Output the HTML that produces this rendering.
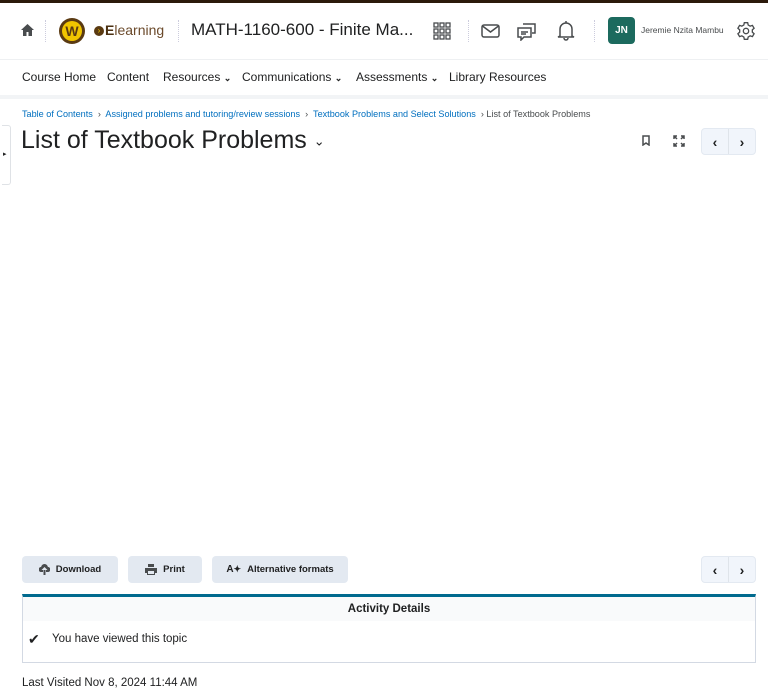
<!DOCTYPE html>
<html><head><meta charset="utf-8"><style>
*{box-sizing:border-box;margin:0;padding:0}
body{width:768px;height:699px;overflow:hidden;background:#fff;font-family:"Liberation Sans",sans-serif;color:#202122;position:relative}
.a{position:absolute;white-space:nowrap}
.btn{position:absolute;background:#e3e9f1;border-radius:4px;height:27px;top:556px;font-size:9.5px;font-weight:bold;color:#202122;display:flex;align-items:center;justify-content:center;gap:6px}
.nav{position:absolute;border:1px solid #e3e9f1;background:#f1f5fb;border-radius:4px;width:55px;height:27px;display:flex}
.nav span{flex:1;display:flex;align-items:center;justify-content:center;font-size:14px;font-weight:bold}
.nav span:first-child{border-right:1px solid #dfe4ea}
.n{position:absolute;top:70px;font-size:12px}
</style></head><body>
<div class="a" style="left:0;top:0;width:768px;height:3px;background:#2b1a0b"></div>
<svg class="a" style="left:21px;top:24px" width="13" height="12" viewBox="0 0 13 12"><path d="M6.5 0L0 6h2v6h3.5V8h2v4H11V6h2z" fill="#494c4e"/></svg>
<div class="a" style="left:45px;top:20px;height:22px;border-left:1px dotted #ccd"></div>
<div class="a" style="left:59px;top:18px;width:26px;height:26px;border-radius:50%;background:#5a3a12;"><div style="position:absolute;left:3px;top:3px;width:20px;height:20px;border-radius:50%;background:#f1c500;color:#5a3a12;font-weight:bold;font-size:14px;text-align:center;line-height:20px">W</div></div>
<div class="a" style="left:94px;top:26px;width:10px;height:10px;border-radius:50%;background:#5a3a12;color:#f1c500;font-size:8px;line-height:10px;text-align:center">›</div>
<div class="a" style="left:105px;top:22px;font-size:14px;color:#6b4a2b"><b style="color:#4a2f10">E</b>learning</div>
<div class="a" style="left:178px;top:20px;height:22px;border-left:1px dotted #ccd"></div>
<div class="a" style="left:191px;top:20px;font-size:17px;color:#202122">MATH-1160-600 - Finite Ma...</div>
<svg class="a" style="left:433px;top:22px" width="18" height="18" viewBox="0 0 18 18" fill="none" stroke="#494c4e" stroke-width="1.3"><rect x="1" y="1" width="4" height="4"/><rect x="7" y="1" width="4" height="4"/><rect x="13" y="1" width="4" height="4"/><rect x="1" y="7" width="4" height="4"/><rect x="7" y="7" width="4" height="4"/><rect x="13" y="7" width="4" height="4"/><rect x="1" y="13" width="4" height="4"/><rect x="7" y="13" width="4" height="4"/><rect x="13" y="13" width="4" height="4"/></svg>
<div class="a" style="left:468px;top:20px;height:22px;border-left:1px dotted #ccd"></div>
<svg class="a" style="left:481px;top:24px" width="19" height="14" viewBox="0 0 19 14" fill="none" stroke="#494c4e" stroke-width="1.5"><rect x="1" y="1" width="17" height="12" rx="2"/><path d="M1.5 2l8 6 8-6"/></svg>
<svg class="a" style="left:517px;top:21px" width="20" height="20" viewBox="0 0 20 20" fill="none" stroke="#494c4e" stroke-width="1.5"><path d="M6 3h12v9h-3"/><path d="M1 7h13v9H7l-3 3v-3H1z"/><path d="M4 11h7M4 13h5"/></svg>
<svg class="a" style="left:557px;top:20px" width="18" height="21" viewBox="0 0 18 21" fill="none" stroke="#494c4e" stroke-width="1.5"><path d="M9 1v2M3 16V9a6 6 0 0112 0v7l2 1H1z"/><path d="M7 18a2 2 0 004 0"/></svg>
<div class="a" style="left:594px;top:20px;height:22px;border-left:1px dotted #ccd"></div>
<div class="a" style="left:608px;top:17px;width:27px;height:27px;border-radius:4px;background:#1c6a5e;color:#fff;font-size:10px;font-weight:bold;text-align:center;line-height:27px">JN</div>
<div class="a" style="left:641px;top:25px;font-size:8.5px;color:#494c4e">Jeremie Nzita Mambu</div>
<svg class="a" style="left:736px;top:21px" width="20" height="20" viewBox="0 0 24 24" fill="none" stroke="#494c4e" stroke-width="1.6"><circle cx="12" cy="12" r="3.2"/><path d="M10 2h4l.6 2.8 2.4 1.4 2.7-.9 2 3.4-2.1 1.9v2.8l2.1 1.9-2 3.4-2.7-.9-2.4 1.4L14 22h-4l-.6-2.8-2.4-1.4-2.7.9-2-3.4 2.1-1.9v-2.8L2.3 8.7l2-3.4 2.7.9 2.4-1.4z"/></svg>
<div class="a" style="left:0;top:59px;width:768px;border-top:1px solid #eef0f2"></div>
<div class="n" style="left:22px">Course Home</div>
<div class="n" style="left:107px">Content</div>
<div class="n" style="left:163px">Resources <b style="font-size:9px">&#8964;</b></div>
<div class="n" style="left:242px">Communications <b style="font-size:9px">&#8964;</b></div>
<div class="n" style="left:356px">Assessments <b style="font-size:9px">&#8964;</b></div>
<div class="n" style="left:449px">Library Resources</div>
<div class="a" style="left:0;top:95px;width:768px;height:4px;background:#f2f4f6"></div>
<div class="a" style="left:22px;top:109px;font-size:9.1px;color:#006fbf">Table of Contents <span style="color:#494c4e">&nbsp;›&nbsp;</span> Assigned problems and tutoring/review sessions <span style="color:#494c4e">&nbsp;›&nbsp;</span> Textbook Problems and Select Solutions <span style="color:#494c4e">&nbsp;› List of Textbook Problems</span></div>
<div class="a" style="left:21px;top:126px;font-size:25px;color:#202122">List of Textbook Problems <span style="font-size:13px;vertical-align:middle">&#8964;</span></div>
<div class="a" style="left:2px;top:125px;width:9px;height:60px;border:1px solid #dfe2e6;border-left:none;border-radius:0 3px 3px 0"></div>
<div class="a" style="left:3px;top:150px;font-size:7px">▸</div>
<svg class="a" style="left:642px;top:135px" width="8" height="11" viewBox="0 0 8 11" fill="none" stroke="#494c4e" stroke-width="1.5"><path d="M1 1h6v9L4 8 1 10z"/></svg>
<svg class="a" style="left:673px;top:135px" width="12" height="12" viewBox="0 0 12 12" fill="none" stroke="#494c4e" stroke-width="1.5"><path d="M1 4V1h3M8 1h3v3M11 8v3H8M4 11H1V8M1 1l3 3M11 1L8 4M11 11L8 8M1 11l3-3"/></svg>
<div class="nav" style="left:701px;top:128px"><span>‹</span><span>›</span></div>
<div class="btn" style="left:22px;width:96px"><svg width="11" height="11" viewBox="0 0 11 11"><path d="M5.5 0a3.5 3.5 0 013.4 3A2.5 2.5 0 019 8H7V6h1.5L5.5 3 2.5 6H4v2H2a2.5 2.5 0 01.1-5A3.5 3.5 0 015.5 0zM4.5 6h2v5h-2z" fill="#494c4e"/></svg>Download</div>
<div class="btn" style="left:128px;width:74px"><svg width="12" height="11" viewBox="0 0 12 11"><path d="M3 0h6v3H3zM0 4h12v5h-2v2H2V9H0zM3 7v3h6V7z" fill="#494c4e"/></svg>Print</div>
<div class="btn" style="left:212px;width:136px"><b style="font-size:10px">A<span style="font-size:9px">✦</span></b>Alternative formats</div>
<div class="nav" style="left:701px;top:556px"><span>‹</span><span>›</span></div>
<div class="a" style="left:22px;top:594px;width:734px;height:69px;border:1px solid #d3d9e3;border-top:3px solid #006a8e"></div>
<div class="a" style="left:23px;top:597px;width:732px;height:24px;background:#f9fafb;text-align:center;font-size:11.5px;font-weight:bold;line-height:24px">Activity Details</div>
<div class="a" style="left:28px;top:631px;font-size:14px;color:#202122">✔</div>
<div class="a" style="left:52px;top:633px;font-size:11.5px">You have viewed this topic</div>
<div class="a" style="left:22px;top:677px;font-size:11.5px">Last Visited Nov 8, 2024 11:44 AM</div>
</body></html>
